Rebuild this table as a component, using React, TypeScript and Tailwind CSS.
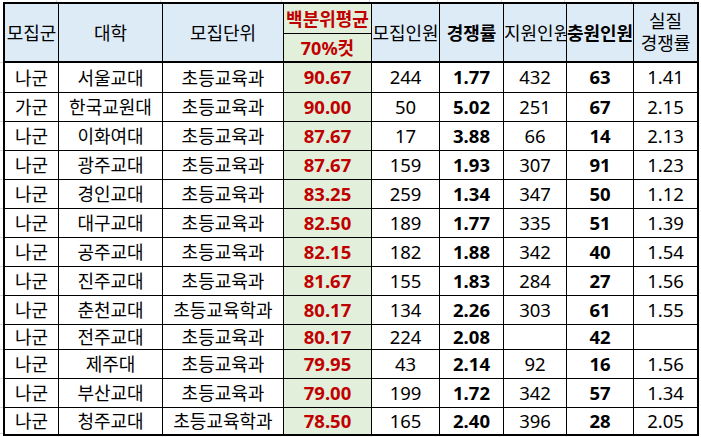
const rows: string[][] = [
  ["나군", "서울교대", "초등교육과", "90.67", "244", "1.77", "432", "63", "1.41"],
  ["가군", "한국교원대", "초등교육과", "90.00", "50", "5.02", "251", "67", "2.15"],
  ["나군", "이화여대", "초등교육과", "87.67", "17", "3.88", "66", "14", "2.13"],
  ["나군", "광주교대", "초등교육과", "87.67", "159", "1.93", "307", "91", "1.23"],
  ["나군", "경인교대", "초등교육과", "83.25", "259", "1.34", "347", "50", "1.12"],
  ["나군", "대구교대", "초등교육과", "82.50", "189", "1.77", "335", "51", "1.39"],
  ["나군", "공주교대", "초등교육과", "82.15", "182", "1.88", "342", "40", "1.54"],
  ["나군", "진주교대", "초등교육과", "81.67", "155", "1.83", "284", "27", "1.56"],
  ["나군", "춘천교대", "초등교육학과", "80.17", "134", "2.26", "303", "61", "1.55"],
  ["나군", "전주교대", "초등교육과", "80.17", "224", "2.08", "", "42", ""],
  ["나군", "제주대", "초등교육과", "79.95", "43", "2.14", "92", "16", "1.56"],
  ["나군", "부산교대", "초등교육과", "79.00", "199", "1.72", "342", "57", "1.34"],
  ["나군", "청주교대", "초등교육학과", "78.50", "165", "2.40", "396", "28", "2.05"],
]

// row heights incl. bottom line, read off the sheet
const rowH = [
  "h-[30px]", "h-[29px]", "h-[29px]", "h-[29px]", "h-[29px]", "h-[29px]", "h-[29px]",
  "h-[29px]", "h-[29px]", "h-[25px]", "h-[29px]", "h-[29px]", "h-[26px]",
]

const colW = [
  "w-[54px]", "w-[104px]", "w-[121px]", "w-[88px]", "w-[68px]",
  "w-[64px]", "w-[63px]", "w-[67px]", "w-[63px]",
]

// per column: text style of data cells
const cellText = [
  "text-[18px]",
  "text-[18px]",
  "text-[18px]",
  "text-[18.5px] font-bold text-[#c00000] bg-[#e2efda]",
  "text-[18.5px]",
  "text-[18.5px] font-bold",
  "text-[18.5px]",
  "text-[18.5px] font-bold",
  "text-[18.5px]",
]

function Head({ children, className = "" }: { children: React.ReactNode; className?: string }) {
  return (
    <div
      className={`h-[59px] flex items-center justify-center overflow-hidden whitespace-nowrap bg-[#ddebf7] border-r border-b-2 border-black text-[18px] ${className}`}
    >
      {children}
    </div>
  )
}

export default function App() {
  return (
    <div className="w-[701px] h-[437px] bg-white overflow-hidden text-black font-['Noto_Sans','Noto_Sans_CJK_KR',sans-serif]">
      {/* sheet gridlines above the table */}
      <div className="h-[2px] flex pl-[3px]">
        {colW.map((w, i) => (
          <div key={i} className={`${w} h-full border-r border-[#d9d9d9]`} />
        ))}
      </div>

      <div className="flex">
        <div className="w-[3px] flex flex-col">
          <div className="h-[61px] border-b border-[#d9d9d9]" />
          {rowH.map((h, i) => (
            <div key={i} className={`${h} border-b border-[#d9d9d9]`} />
          ))}
        </div>

        <div className="w-[696px] border-2 border-black grid grid-cols-[54px_104px_121px_88px_68px_64px_63px_67px_63px] leading-none">
          <Head>모집군</Head>
          <Head>대학</Head>
          <Head>모집단위</Head>
          <div className="h-[59px] flex flex-col bg-[#e2efda] border-r border-b-2 border-black font-bold text-[#c00000] text-[18px]">
            <div className="h-[30px] border-b border-black flex items-center justify-center whitespace-nowrap overflow-hidden">
              백분위평균
            </div>
            <div className="flex-1 flex items-center justify-center">70%컷</div>
          </div>
          <Head>모집인원</Head>
          <Head className="font-bold">경쟁률</Head>
          <Head className="!justify-start">지원인원</Head>
          <Head className="font-bold">충원인원</Head>
          <div className="h-[59px] flex flex-col items-center justify-center bg-[#ddebf7] border-b-2 border-black text-[18px] leading-[22px] pb-[2px]">
            <span>실질</span>
            <span>경쟁률</span>
          </div>

          {rows.map((r, ri) =>
            r.map((v, ci) => (
              <div
                key={`${ri}-${ci}`}
                className={`${rowH[ri]} flex items-center justify-center whitespace-nowrap overflow-hidden border-black ${
                  ci < 8 ? "border-r" : ""
                } ${ri < 12 ? "border-b" : ""} ${cellText[ci]}`}
              >
                {v}
              </div>
            ))
          )}
        </div>
      </div>
    </div>
  )
}
